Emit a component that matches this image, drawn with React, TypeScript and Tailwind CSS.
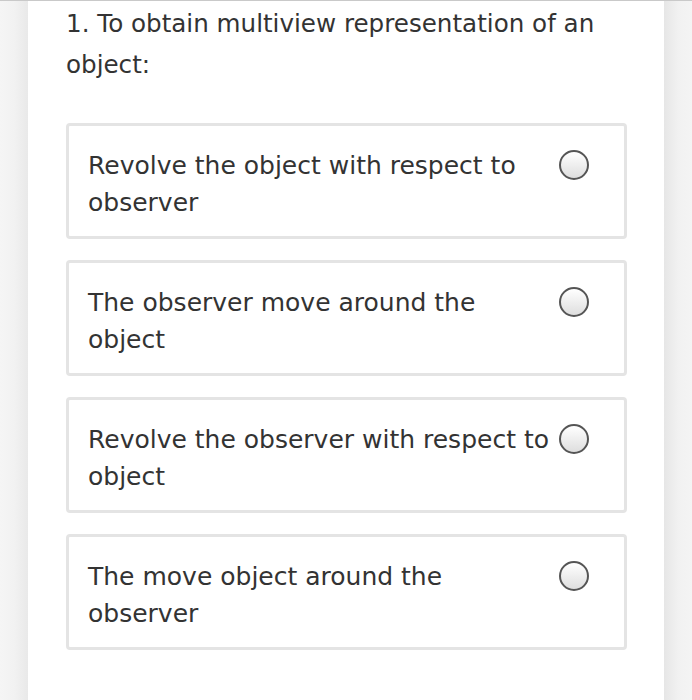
import React from 'react';

const options = [
  'Revolve the object with respect to observer',
  'The observer move around the object',
  'Revolve the observer with respect to object',
  'The move object around the observer',
];

const Radio = () => (
  <span className="mt-[3px] block h-[30px] w-[30px] shrink-0 rounded-full border-2 border-[#555] bg-gradient-to-b from-white to-[#dedede]" />
);

export default function App() {
  return (
    <div className="flex h-[700px] w-[692px] overflow-hidden border-t border-[#c9c9c9] bg-[#f4f4f4] font-['DejaVu_Sans',Arial,sans-serif] text-[#333]">
      <div className="w-[28px] shrink-0 bg-gradient-to-r from-[#f5f5f5] via-[#f2f2f2] to-[#e9e9e9]" />
      <div className="w-[636px] shrink-0 bg-white pl-[38px] pr-[30px] pt-[2px]">
        <h1 className="text-[24.6px] leading-[41px]">
          1. To obtain multiview representation of an object:
        </h1>
        <div className="mr-[7px] mt-[38px] flex flex-col gap-[21px]">
          {options.map((o) => (
            <label
              key={o}
              className="flex h-[116px] items-start gap-[6px] rounded-[4px] border-[3px] border-[#e4e4e4] pl-[19px] pr-[35px] pt-[21px]"
            >
              <span className="flex-1 text-[25px] leading-[37px]">{o}</span>
              <Radio />
            </label>
          ))}
        </div>
      </div>
      <div className="flex-1 bg-gradient-to-r from-[#e6e6e6] via-[#f1f1f1] to-[#f4f4f4]" />
    </div>
  );
}
